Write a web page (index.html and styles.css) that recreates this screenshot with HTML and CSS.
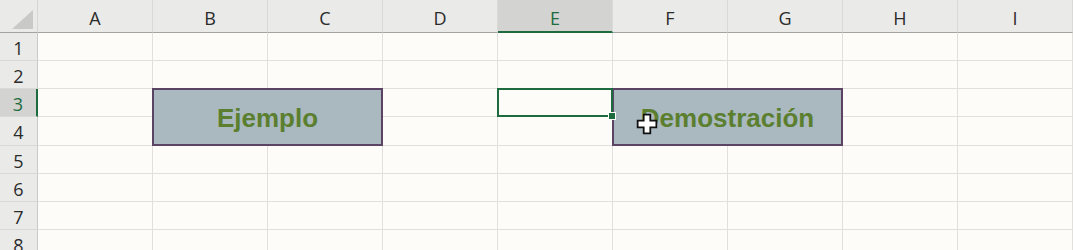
FILE: index.html
```html
<!DOCTYPE html>
<html>
<head>
<meta charset="utf-8">
<link rel="stylesheet" href="styles.css">
</head>
<body>
<div class="sheet">
  <div class="corner"><svg class="tri" width="22" height="20" viewBox="0 0 22 20"><polygon points="21,0 21,19 0,19" fill="#c9c9c7"/></svg></div>
  <div class="ch">A</div><div class="ch">B</div><div class="ch">C</div><div class="ch">D</div><div class="ch sel">E</div><div class="ch">F</div><div class="ch">G</div><div class="ch">H</div><div class="ch">I</div>

  <div class="rh">1</div><div class="c"></div><div class="c"></div><div class="c"></div><div class="c"></div><div class="c"></div><div class="c"></div><div class="c"></div><div class="c"></div><div class="c"></div>
  <div class="rh">2</div><div class="c"></div><div class="c"></div><div class="c"></div><div class="c"></div><div class="c"></div><div class="c"></div><div class="c"></div><div class="c"></div><div class="c"></div>
  <div class="rh sel">3</div><div class="c"></div><div class="c"></div><div class="c act"><span class="frame"><span class="handle"></span></span></div><div class="c"></div><div class="c"></div>
  <div class="rh">4</div><div class="c"></div><div class="c"></div><div class="c"></div><div class="c"></div><div class="c"></div>
  <div class="rh">5</div><div class="c"></div><div class="c"></div><div class="c"></div><div class="c"></div><div class="c"></div><div class="c"></div><div class="c"></div><div class="c"></div><div class="c"></div>
  <div class="rh">6</div><div class="c"></div><div class="c"></div><div class="c"></div><div class="c"></div><div class="c"></div><div class="c"></div><div class="c"></div><div class="c"></div><div class="c"></div>
  <div class="rh">7</div><div class="c"></div><div class="c"></div><div class="c"></div><div class="c"></div><div class="c"></div><div class="c"></div><div class="c"></div><div class="c"></div><div class="c"></div>
  <div class="rh">8</div><div class="c"></div><div class="c"></div><div class="c"></div><div class="c"></div><div class="c"></div><div class="c"></div><div class="c"></div><div class="c"></div><div class="c"></div>

  <div class="merged m1">Ejemplo</div>
  <div class="merged m2">Demostración
    <svg class="cursor" width="22" height="22" viewBox="0 0 20 20"><path d="M7 1.5h6v5.5h5.5v6H13v5.5H7V13H1.5V7H7z" fill="#fff" stroke="#111" stroke-width="1.6" stroke-linejoin="miter"/></svg>
  </div>
</div>
</body>
</html>
```

FILE: styles.css
```css
html, body {
  margin: 0;
  padding: 0;
  background: #fdfcf8;
  overflow: hidden;
}
.sheet {
  display: grid;
  grid-template-columns: 38px repeat(9, 115px);
  grid-template-rows: 33px 28px 28px 28px 29px 28px 28px 28px 28px;
  width: 1073px;
  font-family: "Open Sans", "Noto Sans", sans-serif;
  position: relative;
}
.corner {
  background: #eaeae8;
  border-right: 1px solid #d6d6d4;
  border-bottom: 1px solid #a3a3a1;
  box-sizing: border-box;
  position: relative;
}
.tri {
  position: absolute;
  right: 3px;
  bottom: 2px;
}
.ch {
  background: #eaeae8;
  border-right: 1px solid #d9d9d7;
  border-bottom: 1px solid #a3a3a1;
  box-sizing: border-box;
  display: flex;
  align-items: center;
  justify-content: center;
  font-size: 18px;
  color: #2b2b2b;
  padding-top: 4px;
}
.ch.sel {
  background: #d3d3d1;
  color: #1d6b3f;
  border-bottom: 2px solid #1d6b3f;
  padding-top: 5px;
}
.rh {
  background: #eaeae8;
  border-right: 1px solid #c9c9c7;
  border-bottom: 1px solid #d9d9d7;
  box-sizing: border-box;
  display: flex;
  align-items: center;
  justify-content: center;
  font-size: 18px;
  color: #2b2b2b;
  padding-top: 2px;
}
.rh.sel {
  background: #d3d3d1;
  color: #1d6b3f;
  border-right: 2px solid #1d6b3f;
}
.c {
  border-right: 1px solid #e2e0dc;
  border-bottom: 1px solid #e2e0dc;
  box-sizing: border-box;
}
.act {
  position: relative;
  z-index: 2;
}
.frame {
  position: absolute;
  left: -1px;
  top: -1px;
  right: -1px;
  bottom: -1px;
  border: 2px solid #1d6b3f;
}
.handle {
  position: absolute;
  right: -5px;
  bottom: -5px;
  width: 6px;
  height: 6px;
  background: #1d6b3f;
  border: 1px solid #fdfcf8;
}
.merged {
  grid-row: 4 / 6;
  margin: -1px 0 0 -1px;
  background: #a9b9bf;
  border: 2px solid #5b4363;
  box-sizing: border-box;
  display: flex;
  align-items: center;
  justify-content: center;
  font-family: "Liberation Sans", Arial, sans-serif;
  font-weight: bold;
  font-size: 26px;
  color: #5b7f2f;
  position: relative;
  padding-top: 3px;
}
.m1 { grid-column: 3 / 5; }
.m2 { grid-column: 7 / 9; }
.cursor {
  position: absolute;
  left: 22px;
  top: 23px;
}
```
